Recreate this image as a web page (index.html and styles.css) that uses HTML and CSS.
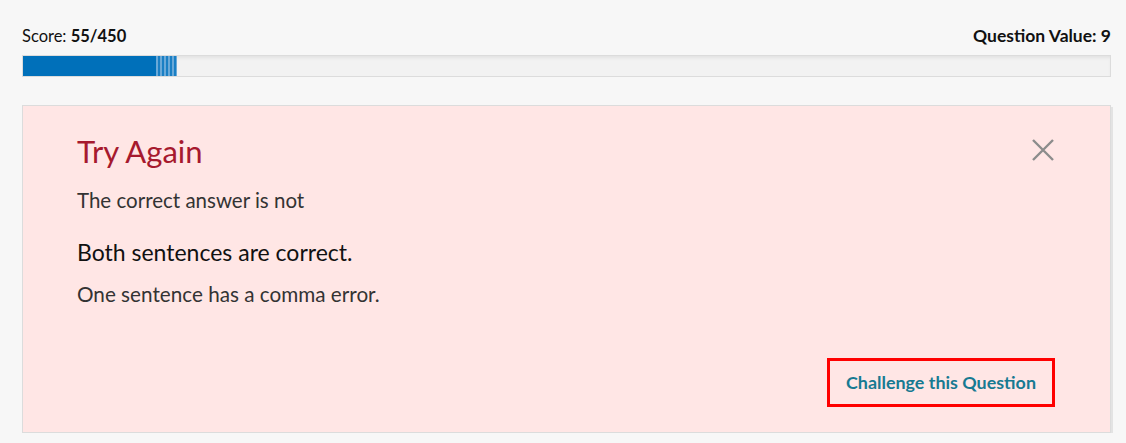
FILE: index.html
```html
<!DOCTYPE html>
<html>
<head>
<meta charset="utf-8">
<link rel="stylesheet" href="styles.css">
</head>
<body>
<div class="page">
  <div class="status">
    <div class="score">Score: <strong>55/450</strong></div>
    <div class="value">Question Value: 9</div>
  </div>
  <div class="progress">
    <div class="fill"></div>
    <div class="stripes"></div>
  </div>
  <div class="card">
    <div class="card-head">
      <h2 class="title">Try Again</h2>
      <button class="close" aria-label="Close">
        <svg width="22" height="22" viewBox="0 0 22 22"><path d="M1 1L21 21M21 1L1 21" stroke="#8c8c8c" stroke-width="2.4" fill="none"/></svg>
      </button>
    </div>
    <p class="intro">The correct answer is not</p>
    <p class="answer">Both sentences are correct.</p>
    <p class="explain">One sentence has a comma error.</p>
    <div class="actions">
      <a class="challenge" href="#">Challenge this Question</a>
    </div>
  </div>
</div>
</body>
</html>
```
FILE: styles.css
```css
html, body {
  margin: 0;
  padding: 0;
  background: #f7f7f7;
}
body {
  font-family: "Lato", "Open Sans", sans-serif;
  color: #222;
}
.page {
  width: 1089px;
  margin-left: 22px;
  padding-top: 25px;
}
.status {
  display: flex;
  justify-content: space-between;
  font-size: 16.5px;
  line-height: 22px;
  color: #111;
}
.score strong {
  font-weight: 700;
}
.value {
  font-weight: 700;
  font-size: 17.5px;
}
.progress {
  margin-top: 8px;
  height: 20px;
  border: 1px solid #dcdcdc;
  background: #f2f2f2;
  box-shadow: inset 0 3px 3px -1px #e2e2e2;
  display: flex;
}
.fill {
  width: 133px;
  background: #0070ba;
}
.stripes {
  width: 21px;
  background: repeating-linear-gradient(90deg, #6aa9d8 0 2px, #1a7fc4 2px 4px);
}
.card {
  margin-top: 28px;
  height: 328px;
  box-sizing: border-box;
  background: #ffe6e5;
  border: 1px solid #dcdcdc;
  box-shadow: 2px 2px 0 #e3e3e3;
  padding: 25px 56px 0 54px;
  display: flex;
  flex-direction: column;
}
.card-head {
  display: flex;
  justify-content: space-between;
  align-items: flex-start;
}
.title {
  margin: 0;
  font-size: 31px;
  font-weight: 400;
  line-height: 40px;
  color: #a6192e;
}
.close {
  border: 0;
  background: none;
  padding: 0;
  margin: 8px 0 0 0;
  width: 22px;
  height: 22px;
  cursor: pointer;
}
.close svg { display: block; }
.intro {
  margin: 16px 0 0 0;
  font-size: 20.5px;
  line-height: 26px;
  color: #333;
}
.answer {
  margin: 25px 0 0 0;
  font-size: 23px;
  line-height: 28px;
  color: #111;
}
.explain {
  margin: 15px 0 0 0;
  font-size: 20.7px;
  line-height: 26px;
  color: #333;
}
.actions {
  margin-top: auto;
  margin-bottom: 25px;
  display: flex;
  justify-content: flex-end;
}
.challenge {
  display: block;
  width: 228px;
  height: 49px;
  box-sizing: border-box;
  border: 3px solid #ff0000;
  margin-right: -1px;
  text-align: center;
  line-height: 43px;
  font-size: 17.9px;
  font-weight: 700;
  color: #177a92;
  text-decoration: none;
}
```
